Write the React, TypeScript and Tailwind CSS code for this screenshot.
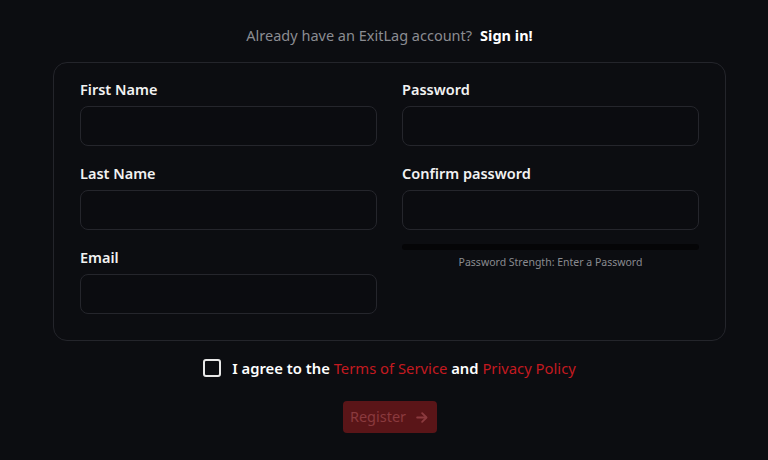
import React from "react";

function Field({ label }: { label: string }) {
  return (
    <div className="flex flex-col">
      <label className="text-[14.5px] font-semibold text-[#f2f2f2] leading-[20px] mb-[7px]">{label}</label>
      <div className="h-[40px] rounded-[8px] border border-[#25262c] bg-[#0b0c10]" />
    </div>
  );
}

export default function App() {
  return (
    <div
      className="w-[768px] h-[460px] bg-[#0c0d11] pl-[11px] flex flex-col items-center overflow-hidden"
      style={{ fontFamily: '"Noto Sans", "Open Sans", sans-serif' }}
    >
      <div className="mt-[25px] h-[22px] flex items-center text-[14.5px]">
        <span className="text-[#8b8c91]">Already have an ExitLag account?</span>
        <span className="ml-[8px] font-bold text-white">Sign in!</span>
      </div>
      <div className="mt-[15px] w-[673px] h-[279px] shrink-0 rounded-[14px] border border-[#24252b] px-[26px] pt-[16px]">
        <div className="grid grid-cols-2 gap-x-[25px]">
          <div className="flex flex-col gap-[17px]">
            <Field label="First Name" />
            <Field label="Last Name" />
            <Field label="Email" />
          </div>
          <div className="flex flex-col">
            <Field label="Password" />
            <div className="mt-[17px]">
              <Field label="Confirm password" />
            </div>
            <div className="mt-[14px] h-[6px] rounded-full bg-[#050507]" />
            <div className="mt-[5px] text-center text-[10.5px] text-[#8a8b90]">Password Strength: Enter a Password</div>
          </div>
        </div>
      </div>
      <div className="mt-[17px] flex items-center h-[20px]">
        <div className="w-[18px] h-[18px] rounded-[3px] border-2 border-[#e8e8e8]" />
        <div className="ml-[11px] text-[14.8px] text-white">
          <span className="font-semibold">I agree to the </span>
          <span className="text-[#c41a20]">Terms of Service</span>
          <span className="font-semibold"> and </span>
          <span className="text-[#c41a20]">Privacy Policy</span>
        </div>
      </div>
      <div className="mt-[23px] w-[94px] h-[32px] rounded-[4px] bg-[#5a1518] flex items-center justify-center gap-[8px] text-[14.5px] text-[#8b3a3e]">
        <span>Register</span>
        <svg width="15" height="15" viewBox="0 0 24 24" fill="none" stroke="currentColor" strokeWidth="3" strokeLinecap="round" strokeLinejoin="round">
          <path d="M5 12h14" />
          <path d="M13 5l7 7-7 7" />
        </svg>
      </div>
    </div>
  );
}
